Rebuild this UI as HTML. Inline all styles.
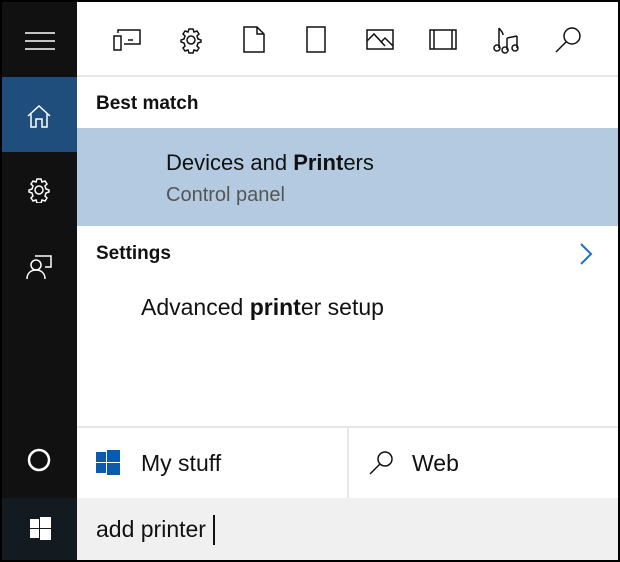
<!DOCTYPE html>
<html><head><style>
*{margin:0;padding:0;box-sizing:border-box}
body{width:620px;height:562px;background:#000;position:relative;overflow:hidden;font-family:"Liberation Sans",sans-serif;color:#000}
.a{position:absolute;white-space:nowrap}
svg{position:absolute;fill:none;stroke:#111;stroke-width:1.5}
.side svg{stroke:#fff}
</style></head><body>
<div class="a" style="left:2px;top:2px;width:75px;height:558px;background:#111"></div>
<div class="a" style="left:2px;top:77px;width:75px;height:75px;background:#1f4e7d"></div>
<div class="a" style="left:2px;top:498px;width:75px;height:62px;background:#131b20"></div>
<div class="a" style="left:77px;top:2px;width:541px;height:496px;background:#fff"></div>
<div class="a" style="left:77px;top:75px;width:541px;height:2px;background:#e6e6e6"></div>
<div class="a" style="left:77px;top:128px;width:541px;height:98px;background:#b4cae1"></div>
<div class="a" style="left:77px;top:426px;width:541px;height:2px;background:#e6e6e6"></div>
<div class="a" style="left:347px;top:428px;width:2px;height:70px;background:#e6e6e6"></div>
<div class="a" style="left:77px;top:498px;width:541px;height:62px;background:#f0f0f0"></div>

<div class="side">
<svg style="left:22px;top:30px" width="36" height="22"><path d="M3 3H33M3 11H33M3 19H33"/></svg>
<svg style="left:26px;top:103px" width="26" height="26"><path d="M2 13L13 3L24 13M5 11V24H10V16H16V24H21V11"/></svg>
<svg style="left:26px;top:177px" width="26" height="26"><circle cx="13" cy="13" r="4"/><path d="M11 2h4l1 3 3-1 2 3-2 2 1 3 3 1v2l-3 1-1 3 2 2-2 3-3-1-1 3h-4l-1-3-3 1-2-3 2-2-1-3-3-1v-2l3-1 1-3-2-2 2-3 3 1z"/></svg>
<svg style="left:25px;top:253px" width="28" height="28"><path d="M10 3H26V14H20"/><circle cx="11" cy="12" r="5"/><path d="M2 26C2 20 6 17 11 17S20 20 20 26"/></svg>
<svg style="left:26px;top:447px" width="26" height="26"><circle cx="13" cy="13" r="10" stroke-width="2.5"/></svg>
<div class="a" style="left:30px;top:519px;width:9px;height:9px;background:#fff"></div>
<div class="a" style="left:40px;top:517px;width:11px;height:11px;background:#fff"></div>
<div class="a" style="left:30px;top:529px;width:9px;height:9px;background:#fff"></div>
<div class="a" style="left:40px;top:529px;width:11px;height:11px;background:#fff"></div>
</div>

<svg style="left:112px;top:28px" width="30" height="24"><path d="M6 5V2H28V16H12M2 8H9V22H2Z"/><path d="M16 12h5"/></svg>
<svg style="left:177px;top:26px" width="28" height="28"><circle cx="14" cy="14" r="4"/><path d="M12 3h4l1 3 3-1 2 3-2 2 1 3 3 1v2l-3 1-1 3 2 2-2 3-3-1-1 3h-4l-1-3-3 1-2-3 2-2-1-3-3-1v-2l3-1 1-3-2-2 2-3 3 1z"/></svg>
<svg style="left:242px;top:26px" width="24" height="28"><path d="M2 1H15L22 8V26H2Z M15 1V8H22"/></svg>
<svg style="left:305px;top:26px" width="26" height="28"><path d="M2 1H20V26H2Z M20 18V26"/></svg>
<svg style="left:366px;top:29px" width="28" height="22"><path d="M1 1H27V20H1Z M1 12L8 5L19 17 M15 13L19 9L27 17"/></svg>
<svg style="left:429px;top:29px" width="28" height="22"><path d="M1 1H27V20H1Z M5 1V20 M23 1V20" /></svg>
<svg style="left:493px;top:26px" width="26" height="28"><path d="M6 2V22 M6 2C8 5 10 6 10 9 M14 12V24 M24 10V22 M14 12L24 10"/><circle cx="4" cy="22" r="3"/><circle cx="12" cy="24" r="3"/><circle cx="22" cy="22" r="3"/></svg>
<svg style="left:554px;top:25px" width="30" height="30"><circle cx="18" cy="11" r="8"/><path d="M12 17L2 27"/></svg>

<div class="a" style="left:96px;top:93px;font-size:19px;font-weight:bold;color:#111">Best match</div>
<div class="a" style="left:166px;top:150px;font-size:22px;color:#111">Devices and <b>Print</b>ers</div>
<div class="a" style="left:166px;top:184px;font-size:20px;color:#555">Control panel</div>
<div class="a" style="left:96px;top:243px;font-size:19px;font-weight:bold;color:#111">Settings</div>
<svg style="left:578px;top:242px;stroke:#1e6fc7;stroke-width:2" width="16" height="24"><path d="M3 2L13 12L3 22"/></svg>
<div class="a" style="left:141px;top:294px;font-size:23px;color:#111">Advanced <b>print</b>er setup</div>

<div class="a" style="left:96px;top:452px;width:10px;height:10px;background:#0a5aae"></div>
<div class="a" style="left:107px;top:450px;width:13px;height:12px;background:#0a5aae"></div>
<div class="a" style="left:96px;top:463px;width:10px;height:10px;background:#0a5aae"></div>
<div class="a" style="left:107px;top:463px;width:13px;height:12px;background:#0a5aae"></div>
<div class="a" style="left:141px;top:450px;font-size:23px;color:#111">My stuff</div>
<svg style="left:368px;top:449px" width="28" height="28"><circle cx="17" cy="10" r="7"/><path d="M12 15L2 25"/></svg>
<div class="a" style="left:412px;top:450px;font-size:23px;color:#111">Web</div>
<div class="a" style="left:96px;top:516px;font-size:23px;color:#111">add printer</div>
<div class="a" style="left:213px;top:515px;width:2px;height:30px;background:#111"></div>
</body></html>
